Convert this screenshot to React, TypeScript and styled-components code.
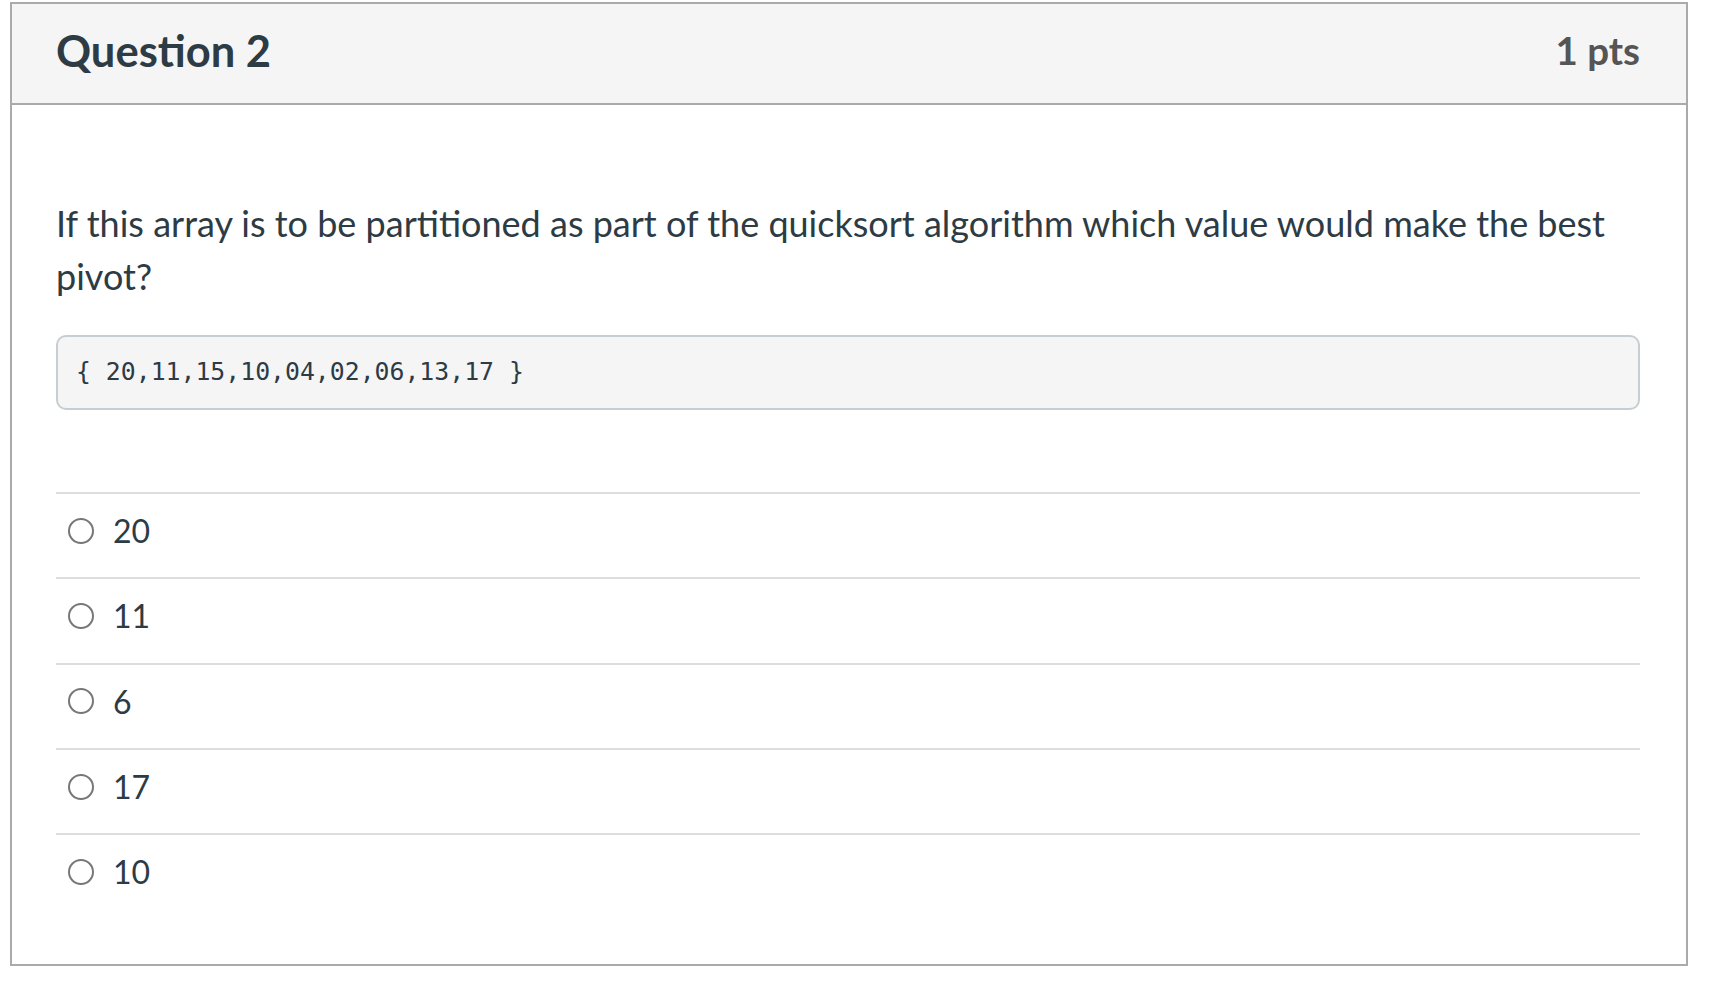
import styled, { createGlobalStyle } from "styled-components";

const GlobalStyle = createGlobalStyle`
  html, body {
    margin: 0;
    padding: 0;
    background: #ffffff;
  }
  body {
    font-family: Lato, "Open Sans", sans-serif;
    color: #2d3b45;
  }
`;

const Card = styled.div`
  box-sizing: border-box;
  width: 1678px;
  margin: 2px 0 0 10px;
  border: 2px solid #aaaaaa;
  background: #ffffff;
`;

const Header = styled.div`
  box-sizing: border-box;
  height: 101px;
  display: flex;
  align-items: center;
  justify-content: space-between;
  padding: 0 46px 8px 44px;
  background: #f5f5f5;
  border-bottom: 2px solid #aaaaaa;
`;

const Title = styled.h2`
  margin: 0;
  font-family: Lato, sans-serif;
  font-size: 43.5px;
  font-weight: 700;
  color: #2d3b45;
`;

const Points = styled.span`
  font-family: Lato, sans-serif;
  font-size: 38.5px;
  font-weight: 700;
  color: #555555;
`;

const Body = styled.div`
  padding: 92px 46px 46px 44px;
`;

const QuestionText = styled.p`
  margin: 0;
  font-size: 36px;
  line-height: 52.5px;
  color: #2d3b45;
`;

const CodeBlock = styled.pre`
  box-sizing: border-box;
  margin: 33px 0 0;
  height: 75px;
  display: flex;
  align-items: center;
  padding: 0 18px 2px;
  background: #f5f5f5;
  border: 2px solid #c7cdd1;
  border-radius: 10px;
  font-family: "DejaVu Sans Mono", "Liberation Mono", monospace;
  font-size: 24.8px;
  color: #2d3b45;
`;

const Answers = styled.div`
  margin-top: 82px;
`;

const AnswerRow = styled.label`
  box-sizing: border-box;
  height: 85.3px;
  display: flex;
  align-items: center;
  gap: 19px;
  padding: 0 12px 10px;
  border-top: 2px solid #dddddd;
`;

const Radio = styled.span`
  box-sizing: border-box;
  width: 26px;
  height: 26px;
  border-radius: 50%;
  border: 2px solid #777777;
  background: #ffffff;
  flex-shrink: 0;
`;

const AnswerText = styled.span`
  font-size: 32px;
  color: #2d3b45;
`;

const answers = ["20", "11", "6", "17", "10"];

export default function App() {
  return (
    <>
      <GlobalStyle />
      <Card>
        <Header>
          <Title>Question 2</Title>
          <Points>1 pts</Points>
        </Header>
        <Body>
          <QuestionText>
            If this array is to be partitioned as part of the quicksort algorithm which
            value would make the best pivot?
          </QuestionText>
          <CodeBlock>{"{ 20,11,15,10,04,02,06,13,17 }"}</CodeBlock>
          <Answers>
            {answers.map((a) => (
              <AnswerRow key={a}>
                <Radio />
                <AnswerText>{a}</AnswerText>
              </AnswerRow>
            ))}
          </Answers>
        </Body>
      </Card>
    </>
  );
}
